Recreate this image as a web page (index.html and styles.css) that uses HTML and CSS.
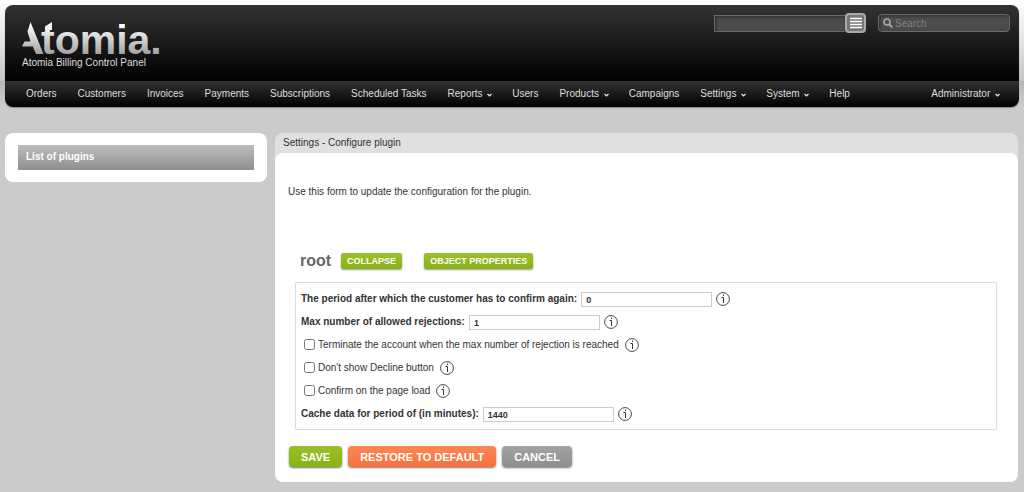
FILE: index.html
```html
<!DOCTYPE html>
<html lang="en">
<head>
  <meta charset="UTF-8">
  <meta name="viewport" content="width=device-width, initial-scale=1.0">
  <title>Atomia Billing Control Panel</title>
  <link rel="stylesheet" href="styles.css">
</head>
<body>
  <svg class="sprite" aria-hidden="true">
    <symbol id="icon-info" viewBox="0 0 14 14">
      <circle cx="7" cy="7" r="6.4" fill="none" stroke="#333" stroke-width="0.9"/>
      <path d="M5.5 5.5H7.5V11M7.5 2.6V4" fill="none" stroke="#333" stroke-width="1"/>
    </symbol>
    <symbol id="icon-caret" viewBox="0 0 5 4">
      <path d="M0.5 1L2.5 2.8L4.5 1" fill="none" stroke="#ddd" stroke-width="1.3"/>
    </symbol>
  </svg>

  <header class="header">
    <div class="header-top">
      <div class="brand">
        <svg class="logo" viewBox="0 0 140 36" role="img" aria-label="Atomia">
          <defs>
            <linearGradient id="logo-fill" x1="0" y1="0" x2="0" y2="36" gradientUnits="userSpaceOnUse">
              <stop offset="0.1" stop-color="#fff"/>
              <stop offset="1" stop-color="#999"/>
            </linearGradient>
          </defs>
          <path d="M8.5 1L21.5 33H14L10.8 25.5H0L2.5 20.5H8.5L5.5 10.5Z" fill="url(#logo-fill)"/>
          <path d="M23 9V5.5L30 1V9Z" fill="url(#logo-fill)"/>
          <text class="logo-text" x="19" y="33" fill="url(#logo-fill)">tomia.</text>
        </svg>
        <span class="tagline">Atomia Billing Control Panel</span>
      </div>
      <form class="search">
        <div class="picker">
          <input type="text" class="picker-input" aria-label="Account">
          <button type="button" class="picker-btn" aria-label="Show list">
            <svg width="14" height="14" viewBox="0 0 14 14">
              <path d="M1 2.5H13M1 5.5H13M1 8.5H13M1 11.5H13" stroke="#fff" stroke-width="1.6"/>
            </svg>
          </button>
        </div>
        <label class="search-box">
          <svg width="10" height="10" viewBox="0 0 10 10">
            <circle cx="4" cy="4" r="3" fill="none" stroke="#aaa" stroke-width="1.5"/>
            <path d="M6.2 6.2L9.2 9.4" stroke="#aaa" stroke-width="1.8"/>
          </svg>
          <input type="text" placeholder="Search" aria-label="Search">
        </label>
      </form>
    </div>
    <nav class="nav">
      <a href="#">Orders</a>
      <a href="#">Customers</a>
      <a href="#">Invoices</a>
      <a href="#">Payments</a>
      <a href="#">Subscriptions</a>
      <a href="#">Scheduled Tasks</a>
      <a href="#">Reports <svg class="caret"><use href="#icon-caret"/></svg></a>
      <a href="#">Users</a>
      <a href="#">Products <svg class="caret"><use href="#icon-caret"/></svg></a>
      <a href="#">Campaigns</a>
      <a href="#">Settings <svg class="caret"><use href="#icon-caret"/></svg></a>
      <a href="#">System <svg class="caret"><use href="#icon-caret"/></svg></a>
      <a href="#">Help</a>
      <a href="#" class="nav-user">Administrator <svg class="caret"><use href="#icon-caret"/></svg></a>
    </nav>
  </header>

  <div class="content">
    <aside class="sidebar">
      <a href="#" class="sidebar-link">List of plugins</a>
    </aside>

    <main class="panel">
      <h1 class="panel-title">Settings - Configure plugin</h1>
      <form class="panel-body">
        <p class="intro">Use this form to update the configuration for the plugin.</p>

        <div class="root-head">
          <h2>root</h2>
          <button type="button" class="btn-small">COLLAPSE</button>
          <button type="button" class="btn-small">OBJECT PROPERTIES</button>
        </div>

        <div class="fields">
          <div class="field">
            <label for="period">The period after which the customer has to confirm again:</label>
            <input type="text" id="period" value="0">
            <svg class="info"><use href="#icon-info"/></svg>
          </div>
          <div class="field">
            <label for="rejections">Max number of allowed rejections:</label>
            <input type="text" id="rejections" value="1">
            <svg class="info"><use href="#icon-info"/></svg>
          </div>
          <div class="field check">
            <input type="checkbox" id="terminate">
            <label for="terminate">Terminate the account when the max number of rejection is reached</label>
            <svg class="info"><use href="#icon-info"/></svg>
          </div>
          <div class="field check">
            <input type="checkbox" id="decline">
            <label for="decline">Don't show Decline button</label>
            <svg class="info"><use href="#icon-info"/></svg>
          </div>
          <div class="field check">
            <input type="checkbox" id="confirm">
            <label for="confirm">Confirm on the page load</label>
            <svg class="info"><use href="#icon-info"/></svg>
          </div>
          <div class="field">
            <label for="cache">Cache data for period of (in minutes):</label>
            <input type="text" id="cache" value="1440">
            <svg class="info"><use href="#icon-info"/></svg>
          </div>
        </div>

        <div class="actions">
          <button type="submit" class="btn btn-save">SAVE</button>
          <button type="button" class="btn btn-restore">RESTORE TO DEFAULT</button>
          <button type="button" class="btn btn-cancel">CANCEL</button>
        </div>
      </form>
    </main>
  </div>
</body>
</html>
```
FILE: styles.css
```css
* {
  box-sizing: border-box;
}
body {
  margin: 0;
  padding: 5px;
  font-family: "Liberation Sans", Arial, sans-serif;
  font-size: 10px;
  line-height: 14px;
  color: #333;
  background: #cbcbcb linear-gradient(#fff, #c6c6c6 80px, #b8b8b8 81px, #cbcbcb 107px) no-repeat;
}
input, button {
  font-family: inherit;
}
.sprite {
  position: absolute;
  width: 0;
  height: 0;
}

/* Header */
.header {
  border-radius: 8px;
  overflow: hidden;
  box-shadow: 0 1px 1px #888;
}
.header-top {
  display: flex;
  justify-content: space-between;
  align-items: flex-start;
  height: 76px;
  padding: 8px 9px 0 17px;
  background: linear-gradient(#333, #000);
}
.brand {
  display: flex;
  flex-direction: column;
  padding-top: 8px;
}
.logo {
  width: 140px;
  height: 36px;
  overflow: visible;
}
.logo-text {
  font-size: 41px;
  font-weight: bold;
}
.tagline {
  line-height: 12px;
  color: #ddd;
}
.search {
  display: flex;
  gap: 12px;
}
.picker {
  display: flex;
  align-items: center;
}
.picker-input {
  width: 131px;
  height: 17px;
  border: 1px solid #6a6a6a;
  border-right: 0;
  background: #4c4c4c;
  box-shadow: inset 1px 1px 3px #2a2a2a;
  color: #ddd;
}
.picker-btn {
  display: grid;
  place-items: center;
  width: 21px;
  height: 20px;
  padding: 0;
  border: 2px solid #aaa;
  border-radius: 4px;
  background: #777;
}
.search-box {
  display: flex;
  align-items: center;
  gap: 2px;
  width: 132px;
  height: 18px;
  margin-top: 1px;
  padding: 0 4px;
  border: 1px solid #6a6a6a;
  border-radius: 4px;
  background: #4c4c4c;
  box-shadow: inset 1px 1px 3px #2a2a2a;
}
.search-box input {
  flex: 1;
  min-width: 0;
  padding: 0;
  border: 0;
  background: none;
  color: #ddd;
  font-size: 10px;
}
.search-box input::placeholder {
  color: #808080;
}
.nav {
  display: flex;
  align-items: center;
  gap: 21px;
  height: 26px;
  padding: 0 20px 0 21px;
  background: linear-gradient(#333, #000);
}
.nav a {
  color: #ddd;
  text-decoration: none;
  white-space: nowrap;
}
.caret {
  width: 5px;
  height: 4px;
  margin-left: 2px;
  margin-right: -1px;
}
.nav .nav-user {
  margin-left: auto;
}

/* Columns */
.content {
  display: grid;
  grid-template-columns: 262px 1fr;
  gap: 8px;
  align-items: start;
  margin-top: 26px;
  padding-right: 1px;
}
.sidebar {
  padding: 12px 13px;
  border-radius: 8px;
  background: #fff;
}
.sidebar-link {
  display: block;
  padding: 5px 8px 6px;
  background: linear-gradient(#bdbdbd, #8f8f8f);
  color: #fff;
  font-weight: bold;
  text-decoration: none;
}
.panel {
  border-radius: 8px;
  background: #e0e0e0;
}
.panel-title {
  margin: 0;
  padding: 3px 8px;
  font-size: 10px;
  font-weight: normal;
}
.panel-body {
  padding: 32px 13px 15px;
  border-radius: 8px;
  background: #fff;
}
.intro {
  margin: 0;
}

/* Root object */
.root-head {
  display: flex;
  align-items: center;
  margin: 52px 12px 11px;
}
.root-head h2 {
  margin: 0 10px 0 0;
  font-size: 16px;
  line-height: 20px;
  color: #666;
}
.btn-small {
  height: 16px;
  margin-right: 22px;
  padding: 0 6px;
  border: 0;
  border-radius: 2px;
  background: linear-gradient(#9cbf2e, #86b312);
  box-shadow: 0 1px 2px #999;
  color: #fff;
  font-size: 9px;
  font-weight: bold;
}
.fields {
  display: flex;
  flex-direction: column;
  gap: 7px;
  margin: 0 8px 0 7px;
  padding: 8px 5px 7px;
  border: 1px solid #ddd;
  border-radius: 2px;
}
.field {
  display: flex;
  align-items: center;
  gap: 4px;
  height: 16px;
}
.field label {
  font-weight: bold;
}
.field input[type="text"] {
  width: 131px;
  height: 15px;
  padding: 1px 4px 0;
  border: 1px solid #ccc;
  font-size: 9px;
  font-weight: bold;
  color: #333;
}
.info {
  width: 14px;
  height: 14px;
}
.check {
  gap: 3px;
  padding-left: 3px;
}
.check input {
  width: 11px;
  height: 11px;
  margin: 0 0 2px;
}
.check .info {
  margin-left: 3px;
}
.field.check label {
  font-weight: normal;
}

/* Form buttons */
.actions {
  display: flex;
  gap: 6px;
  margin: 16px 1px 0;
}
.btn {
  height: 21px;
  padding: 0 12px;
  border: 0;
  border-radius: 4px;
  box-shadow: 0 1px 2px #777;
  color: #fff;
  font-size: 11px;
  font-weight: bold;
}
.btn-save {
  background: linear-gradient(#9cbf2e, #86b312);
}
.btn-restore {
  background: linear-gradient(#fa8855, #f9713c);
}
.btn-cancel {
  background: linear-gradient(#a3a3a3, #8e8e8e);
}
```
